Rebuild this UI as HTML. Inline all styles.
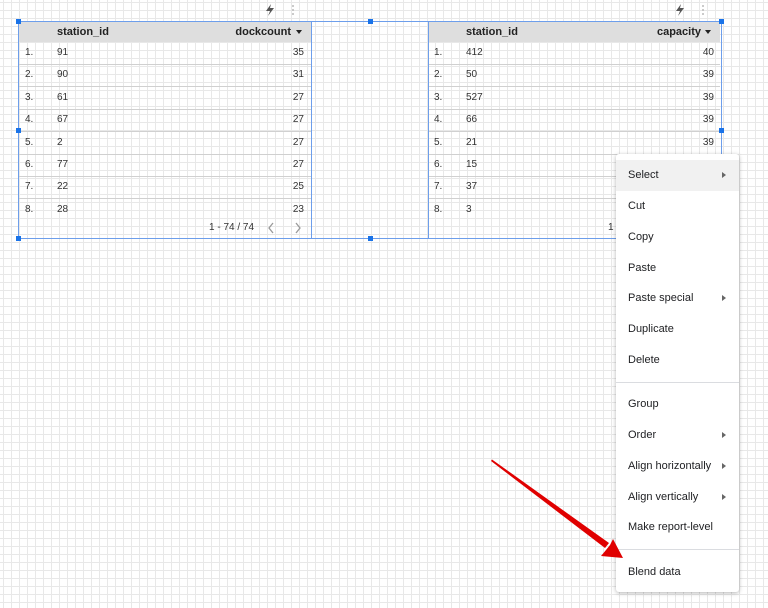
<!DOCTYPE html>
<html><head><meta charset="utf-8"><style>
*{margin:0;padding:0;box-sizing:border-box}
body{width:768px;height:608px;overflow:hidden;position:relative;background:#fff;font-family:"Liberation Sans",Arial,sans-serif;color:#333;
background-image:linear-gradient(to right,#e8e8e8 1px,transparent 1px),linear-gradient(to bottom,#e8e8e8 1px,transparent 1px);background-size:8px 8px;background-position:3px 2px}
.a{position:absolute}
.hdr{position:absolute;top:22px;height:20px;background:#dedede}
.h{position:absolute;top:26px;font-size:11px;font-weight:bold;color:#222}
.c{position:absolute;font-size:10px;color:#333}
.sep{position:absolute;height:1px;background:#d0d0d0}
.hd{position:absolute;width:5px;height:5px;background:#1a73e8}
.menu{position:absolute;left:616px;top:154px;width:123px;height:438px;background:#fff;border-radius:3px;box-shadow:0 1px 4px rgba(0,0,0,.3)}
.mi{position:absolute;left:12px;font-size:11px;color:#202124}
.tri{position:absolute;left:106px;width:0;height:0;border-top:3.5px solid transparent;border-bottom:3.5px solid transparent;border-left:4px solid #666}
.dv{position:absolute;left:0;width:123px;height:1px;background:#dadce0}
</style></head><body>
<div class="hdr" style="left:19px;width:293px"></div>
<div class="h" style="left:57px">station_id</div>
<div class="h" style="left:190px;width:101px;text-align:right">dockcount</div>
<div class="a" style="left:296px;top:30px;border-left:3px solid transparent;border-right:3px solid transparent;border-top:4px solid #222"></div>
<div class="hdr" style="left:429px;width:291px"></div>
<div class="h" style="left:466px">station_id</div>
<div class="h" style="left:600px;width:101px;text-align:right">capacity</div>
<div class="a" style="left:705px;top:30px;border-left:3px solid transparent;border-right:3px solid transparent;border-top:4px solid #222"></div>

<div id="rows"></div>
<script>
var L=[[91,35],[90,31],[61,27],[67,27],[2,27],[77,27],[22,25],[28,23]];
var R=[[412,40],[50,39],[527,39],[66,39],[21,39],[15,''],[37,''],[3,'']];
var h='';
for(var i=0;i<8;i++){var y=47+i*22.4;
h+='<div class="c" style="left:25px;top:'+y+'px">'+(i+1)+'.</div><div class="c" style="left:57px;top:'+y+'px">'+L[i][0]+'</div><div class="c" style="left:260px;width:44px;text-align:right;top:'+y+'px">'+L[i][1]+'</div>';
h+='<div class="c" style="left:434px;top:'+y+'px">'+(i+1)+'.</div><div class="c" style="left:466px;top:'+y+'px">'+R[i][0]+'</div><div class="c" style="left:670px;width:44px;text-align:right;top:'+y+'px">'+R[i][1]+'</div>';
if(i<7){var s=Math.round(64+i*22.4);h+='<div class="sep" style="left:19px;width:293px;top:'+s+'px"></div><div class="sep" style="left:429px;width:291px;top:'+s+'px"></div>';}
}
document.getElementById('rows').innerHTML=h;
</script>
<div class="c" style="left:209px;top:222px">1 - 74 / 74</div>
<svg class="a" style="left:267px;top:222px" width="8" height="12"><path d="M6 1 L2 6 L6 11" fill="none" stroke="#999" stroke-width="1.3"/></svg>
<svg class="a" style="left:294px;top:222px" width="8" height="12"><path d="M2 1 L6 6 L2 11" fill="none" stroke="#999" stroke-width="1.3"/></svg>
<div class="c" style="left:608px;top:222px">1</div>

<div class="a" style="left:18px;top:21px;width:704px;height:218px;border:1px solid #6d9eeb"></div>
<div class="a" style="left:311px;top:21px;width:1px;height:218px;background:#6d9eeb"></div>
<div class="a" style="left:428px;top:21px;width:1px;height:218px;background:#6d9eeb"></div>
<div class="hd" style="left:16px;top:19px"></div><div class="hd" style="left:368px;top:19px"></div><div class="hd" style="left:719px;top:19px"></div>
<div class="hd" style="left:16px;top:128px"></div><div class="hd" style="left:719px;top:128px"></div>
<div class="hd" style="left:16px;top:236px"></div><div class="hd" style="left:368px;top:236px"></div><div class="hd" style="left:719px;top:236px"></div>

<svg class="a" style="left:264px;top:3px" width="12" height="14" viewBox="0 0 12 14"><path d="M7 1 L2 8 H6 L4 13 L10 5 H6 Z" fill="#555"/></svg>
<svg class="a" style="left:291px;top:4px" width="4" height="12"><circle cx="2" cy="2" r="1" fill="#bbb"/><circle cx="2" cy="6" r="1" fill="#bbb"/><circle cx="2" cy="10" r="1" fill="#bbb"/></svg>
<svg class="a" style="left:674px;top:3px" width="12" height="14" viewBox="0 0 12 14"><path d="M7 1 L2 8 H6 L4 13 L10 5 H6 Z" fill="#555"/></svg>
<svg class="a" style="left:701px;top:4px" width="4" height="12"><circle cx="2" cy="2" r="1" fill="#bbb"/><circle cx="2" cy="6" r="1" fill="#bbb"/><circle cx="2" cy="10" r="1" fill="#bbb"/></svg>

<div class="menu">
<div class="a" style="left:0;top:6px;width:123px;height:31px;background:#f1f1f1"></div>
<div class="mi" style="top:15px">Select</div><div class="tri" style="top:18px"></div>
<div class="mi" style="top:46px">Cut</div>
<div class="mi" style="top:77px">Copy</div>
<div class="mi" style="top:108px">Paste</div>
<div class="mi" style="top:138px">Paste special</div><div class="tri" style="top:141px"></div>
<div class="mi" style="top:169px">Duplicate</div>
<div class="mi" style="top:200px">Delete</div>
<div class="dv" style="top:228px"></div>
<div class="mi" style="top:244px">Group</div>
<div class="mi" style="top:275px">Order</div><div class="tri" style="top:278px"></div>
<div class="mi" style="top:306px">Align horizontally</div><div class="tri" style="top:309px"></div>
<div class="mi" style="top:337px">Align vertically</div><div class="tri" style="top:340px"></div>
<div class="mi" style="top:367px">Make report-level</div>
<div class="dv" style="top:395px"></div>
<div class="mi" style="top:412px">Blend data</div>
</div>

<svg class="a" style="left:0;top:0" width="768" height="608">
<path d="M491 461 L492 459.5 L609 543 L605 548 Z" fill="#e00000"/>
<path d="M623 558 L601 556 L606 550 L610 545 L613 539 Z" fill="#e00000"/>
</svg>
</body></html>
